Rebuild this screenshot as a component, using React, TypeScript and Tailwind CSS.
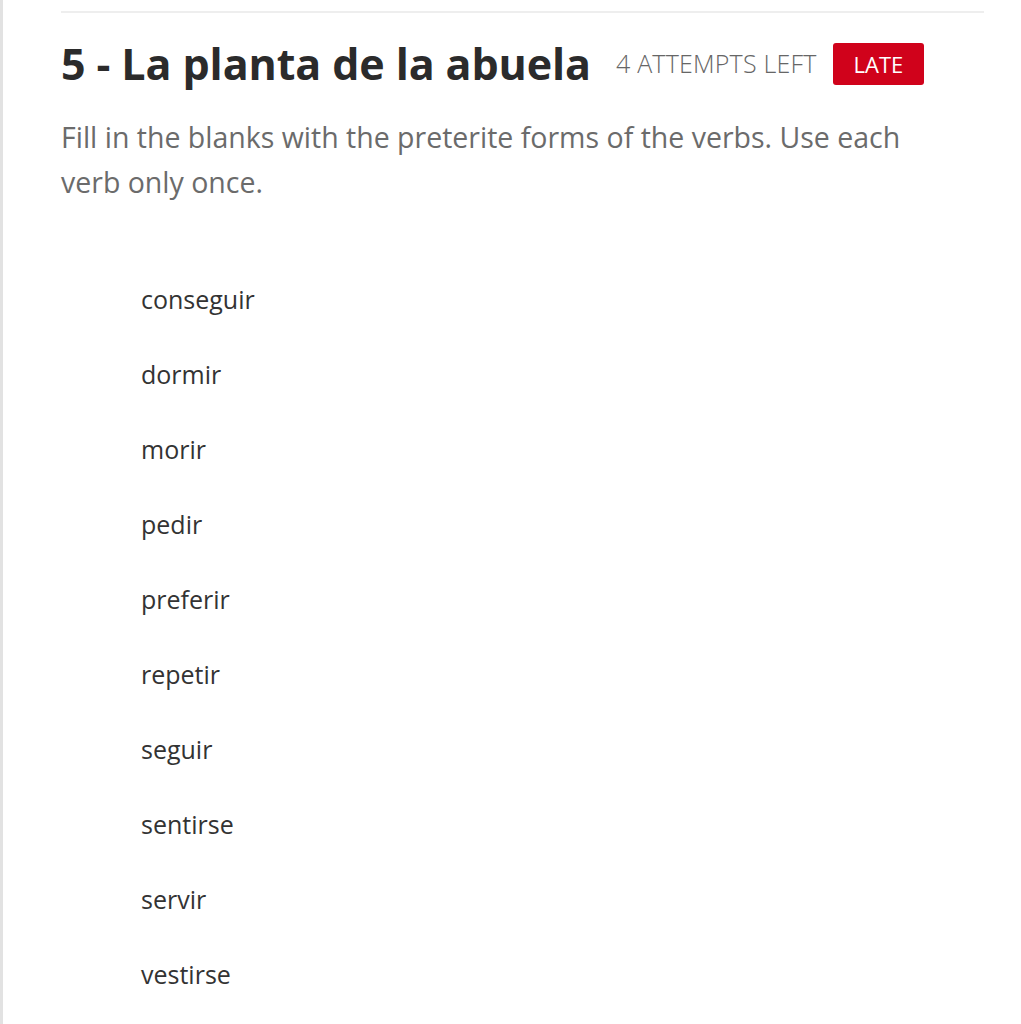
import React from "react";

const verbs = [
  "conseguir",
  "dormir",
  "morir",
  "pedir",
  "preferir",
  "repetir",
  "seguir",
  "sentirse",
  "servir",
  "vestirse",
];

export default function App() {
  return (
    <div className="flex min-h-[1024px] bg-white font-['Open_Sans',sans-serif]">
      <div className="w-[3px] shrink-0 bg-[#e2e2e2]" />
      <div className="flex-1 pl-[58px] pr-[37px] pt-[11px]">
        <div className="h-[2px] bg-[#eeeeee]" />

        <div className="mt-[23px] flex items-center">
          <h1 className="text-[43px] leading-[56px] font-bold text-[#2b2b2b] tracking-[-0.1px]">
            5 - La planta de la abuela
          </h1>
          <span className="ml-[25px] text-[25px] font-light tracking-[0.2px] text-[#666666] uppercase">
            4 Attempts left
          </span>
          <span className="ml-[16px] flex h-[42px] items-center rounded-[3px] bg-[#d0021b] px-[21px] text-[22px] text-white">
            LATE
          </span>
        </div>

        <p className="mt-[23px] max-w-[880px] text-[28.5px] leading-[45px] text-[#6b6b6b]">
          Fill in the blanks with the preterite forms of the verbs. Use each verb only once.
        </p>

        <ul className="mt-[57px] pl-[80px]">
          {verbs.map(verb => (
            <li key={verb} className="text-[25px] leading-[75px] text-[#333333]">
              {verb}
            </li>
          ))}
        </ul>
      </div>
    </div>
  );
}
